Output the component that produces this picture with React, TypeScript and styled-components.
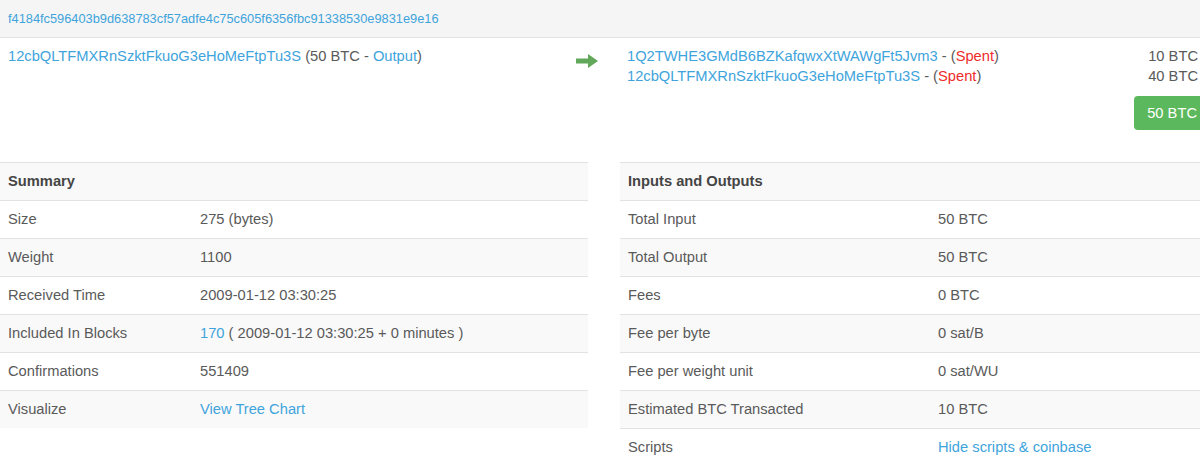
import React from "react";
import styled, { createGlobalStyle } from "styled-components";

const GlobalStyle = createGlobalStyle`
  html, body {
    margin: 0;
    padding: 0;
    background: #fff;
    overflow: hidden;
  }
  body {
    font-family: "Liberation Sans", Arial, Helvetica, sans-serif;
    font-size: 14.7px;
    color: #5a5a5a;
  }
`;

const Page = styled.div`
  width: 1210px;
`;

const HashBar = styled.div`
  height: 37px;
  display: flex;
  align-items: center;
  padding: 0 8px;
  background: #f5f5f5;
  border-bottom: 1px solid #e3e3e3;
  font-size: 12.8px;
`;

const Link = styled.a`
  color: #40a4dc;
  text-decoration: none;
  cursor: pointer;
`;

const TxRow = styled.div`
  display: grid;
  grid-template-columns: 568px 50px 1fr;
  padding: 8px 0 0 8px;
  line-height: 20px;
`;

const ArrowCell = styled.div`
  padding-top: 7px;
`;

const Outputs = styled.div`
  display: flex;
  flex-direction: column;
  padding-left: 1px;
`;

const OutLine = styled.div`
  display: flex;
  justify-content: space-between;
  padding-right: 12px;
`;

const Spent = styled.span`
  color: #ee2b2b;
`;

const TotalRow = styled.div`
  display: flex;
  justify-content: flex-end;
  margin-top: 10px;
`;

const TotalButton = styled.span`
  background: #5cb85c;
  color: #fff;
  border-radius: 4px;
  height: 34px;
  padding: 0 13px;
  display: flex;
  align-items: center;
`;

const Tables = styled.div`
  display: grid;
  grid-template-columns: 588px 590px;
  column-gap: 32px;
  margin-top: 32px;
  align-items: start;
`;

const Table = styled.div`
  display: flex;
  flex-direction: column;
`;

const Row = styled.div<{ $labelWidth: number; $shaded: boolean }>`
  display: grid;
  grid-template-columns: ${(p) => p.$labelWidth}px 1fr;
  height: 38px;
  align-items: center;
  padding: 0 0 1px 8px;
  border-top: 1px solid #e2e2e2;
  box-sizing: border-box;
  background: ${(p) => (p.$shaded ? "#f9f9f9" : "#fff")};
`;

const HeadRow = styled(Row)`
  font-weight: bold;
  color: #454545;
`;

const GreenArrow = () => (
  <svg width="22" height="14" viewBox="0 0 22 14">
    <polygon points="0,4.5 12,4.5 12,0 22,7 12,14 12,9.5 0,9.5" fill="#62a85a" />
  </svg>
);

type Cell = { label: string; value: React.ReactNode };

const summary: Cell[] = [
  { label: "Size", value: "275 (bytes)" },
  { label: "Weight", value: "1100" },
  { label: "Received Time", value: "2009-01-12 03:30:25" },
  {
    label: "Included In Blocks",
    value: (
      <span>
        <Link>170</Link> ( 2009-01-12 03:30:25 + 0 minutes )
      </span>
    ),
  },
  { label: "Confirmations", value: "551409" },
  { label: "Visualize", value: <Link>View Tree Chart</Link> },
];

const io: Cell[] = [
  { label: "Total Input", value: "50 BTC" },
  { label: "Total Output", value: "50 BTC" },
  { label: "Fees", value: "0 BTC" },
  { label: "Fee per byte", value: "0 sat/B" },
  { label: "Fee per weight unit", value: "0 sat/WU" },
  { label: "Estimated BTC Transacted", value: "10 BTC" },
  { label: "Scripts", value: <Link>Hide scripts &amp; coinbase</Link> },
];

const InfoTable: React.FC<{ title: string; rows: Cell[]; labelWidth: number }> = ({
  title,
  rows,
  labelWidth,
}) => (
  <Table>
    <HeadRow $labelWidth={labelWidth} $shaded>
      <span>{title}</span>
      <span />
    </HeadRow>
    {rows.map((r, i) => (
      <Row key={r.label} $labelWidth={labelWidth} $shaded={i % 2 === 1}>
        <span>{r.label}</span>
        <span>{r.value}</span>
      </Row>
    ))}
  </Table>
);

const App: React.FC = () => {
  return (
    <Page>
      <GlobalStyle />
      <HashBar>
        <Link>f4184fc596403b9d638783cf57adfe4c75c605f6356fbc91338530e9831e9e16</Link>
      </HashBar>
      <TxRow>
        <div>
          <Link>12cbQLTFMXRnSzktFkuoG3eHoMeFtpTu3S</Link> (50 BTC - <Link>Output</Link>)
        </div>
        <ArrowCell>
          <GreenArrow />
        </ArrowCell>
        <Outputs>
          <OutLine>
            <span>
              <Link>1Q2TWHE3GMdB6BZKafqwxXtWAWgFt5Jvm3</Link> - (<Spent>Spent</Spent>)
            </span>
            <span>10 BTC</span>
          </OutLine>
          <OutLine>
            <span>
              <Link>12cbQLTFMXRnSzktFkuoG3eHoMeFtpTu3S</Link> - (<Spent>Spent</Spent>)
            </span>
            <span>40 BTC</span>
          </OutLine>
          <TotalRow>
            <TotalButton>50 BTC</TotalButton>
          </TotalRow>
        </Outputs>
      </TxRow>
      <Tables>
        <InfoTable title="Summary" rows={summary} labelWidth={192} />
        <InfoTable title="Inputs and Outputs" rows={io} labelWidth={310} />
      </Tables>
    </Page>
  );
};

export default App;
